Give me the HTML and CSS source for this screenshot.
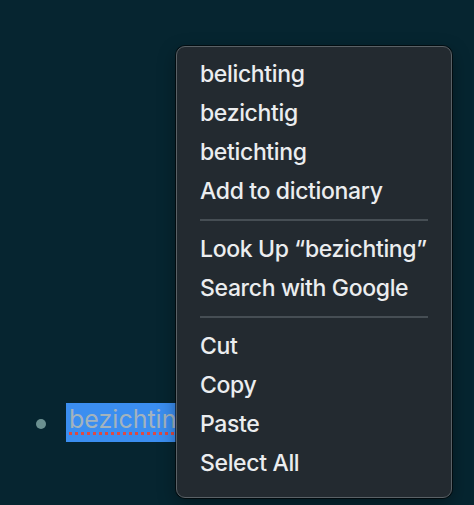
FILE: index.html
```html
<!DOCTYPE html>
<html>
<head>
<meta charset="utf-8">
<link rel="stylesheet" href="styles.css">
</head>
<body>
<div class="editor">
  <ul class="list">
    <li class="item"><span class="bullet"></span><span class="sel"><span class="misspelled">bezichting</span></span></li>
  </ul>
</div>
<div class="menu">
  <div class="mi">belichting</div>
  <div class="mi">bezichtig</div>
  <div class="mi">betichting</div>
  <div class="mi">Add to dictionary</div>
  <div class="sep"></div>
  <div class="mi">Look Up “bezichting”</div>
  <div class="mi">Search with Google</div>
  <div class="sep"></div>
  <div class="mi">Cut</div>
  <div class="mi">Copy</div>
  <div class="mi">Paste</div>
  <div class="mi">Select All</div>
</div>
</body>
</html>
```
FILE: styles.css
```css
html, body {
  margin: 0;
  padding: 0;
  background: #062530;
  width: 474px;
  height: 505px;
  overflow: hidden;
  font-family: Inter, "Noto Sans", sans-serif;
}
.editor {
  padding-top: 403px;
}
.list {
  list-style: none;
  margin: 0;
  padding: 0 0 0 36px;
}
.item {
  display: flex;
  align-items: center;
  height: 39px;
}
.bullet {
  width: 10px;
  height: 10px;
  border-radius: 50%;
  background: #6b9090;
  margin-right: 20px;
  margin-top: 2px;
}
.sel {
  background: #3b8ef0;
  height: 39px;
  display: flex;
  align-items: flex-start;
  padding: 0 3px;
  font-size: 25px;
  color: #a3b3bd;
  white-space: nowrap;
}
.misspelled {
  display: block;
  line-height: 26px;
  margin-top: 3px;
  border-bottom: 3px dotted #dd4a44;
}
.menu {
  position: absolute;
  left: 176px;
  top: 46px;
  width: 274px;
  height: 442px;
  box-sizing: content-box;
  background: #232a30;
  border: 1px solid #5a6166;
  border-radius: 9px;
  box-shadow: 0 0 0 1px rgba(0,0,0,0.6), 0 6px 18px rgba(0,0,0,0.35);
  display: flex;
  flex-direction: column;
  padding-top: 8px;
}
.mi {
  height: 39px;
  line-height: 39px;
  padding-left: 23px;
  font-size: 23px;
  font-weight: 500;
  letter-spacing: -0.35px;
  color: #ebedef;
  white-space: nowrap;
}
.sep {
  height: 2px;
  background: #464e54;
  margin: 8px 23px 9px 23px;
}
```
